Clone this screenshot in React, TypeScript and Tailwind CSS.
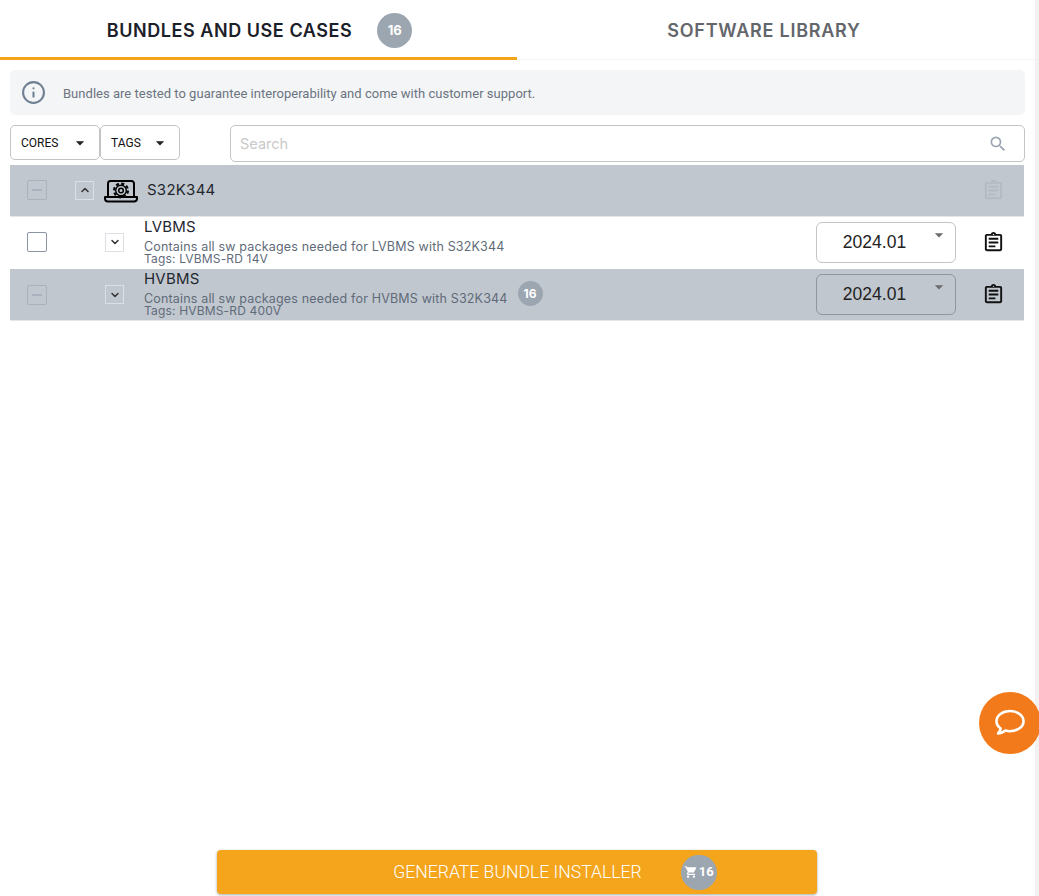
import { ChevronDown, ChevronUp, Info } from 'lucide-react'
import { MdOutlineAssignment, MdShoppingCart, MdArrowDropDown, MdSearch } from 'react-icons/md'

const heading = "font-['Inter',sans-serif]"
const body = "font-['Roboto',sans-serif]"

interface Bundle {
  name: string
  description: string
  tags: string
  active: boolean
  count?: number
}

const bundles: Bundle[] = [
  {
    name: 'LVBMS',
    description: 'Contains all sw packages needed for LVBMS with S32K344',
    tags: 'Tags: LVBMS-RD 14V',
    active: true,
  },
  {
    name: 'HVBMS',
    description: 'Contains all sw packages needed for HVBMS with S32K344',
    tags: 'Tags: HVBMS-RD 400V',
    active: false,
    count: 16,
  },
]

function LaptopGear() {
  return (
    <svg width="34" height="23" viewBox="0 0 34 23" fill="none" stroke="#000" strokeWidth="2">
      <path d="M4 16V3.500A2.500 2.500 0 0 1 6.500 1h21A2.500 2.500 0 0 1 30 3.500V16" />
      <path d="M1 17h32v1.500a3 3 0 0 1-3 3H4a3 3 0 0 1-3-3z" strokeLinejoin="round" />
      <circle cx="17" cy="10.500" r="2.300" strokeWidth="1.500" />
      <circle cx="17" cy="10.500" r="6.900" strokeWidth="2.200" strokeDasharray="3.100 2.320" />
      <circle cx="17" cy="10.500" r="5.300" strokeWidth="1.400" />
    </svg>
  )
}

function FilterButton({ label, width }: { label: string; width: string }) {
  return (
    <button className={`flex h-[35px] items-center justify-between rounded-[5px] border border-[#c4c4c4] bg-white pl-[10px] pr-[9px] text-[12px] text-[#111] ${width} ${body}`}>
      <span className="pt-px">{label}</span>
      <MdArrowDropDown className="text-[20px] text-[#222]" />
    </button>
  )
}

function Badge({ children }: { children: React.ReactNode }) {
  return (
    <span className={`flex h-[25px] w-[25px] items-center justify-center rounded-full bg-[#9ca6b1] text-[12px] font-bold text-white ${heading}`}>
      {children}
    </span>
  )
}

function BundleRow({ bundle }: { bundle: Bundle }) {
  const { active } = bundle
  return (
    <div className={`mr-px flex h-[52px] items-center ${active ? 'bg-white pb-[2px]' : 'border-b border-[#e4e6ea] bg-[#c1c7ce]'}`}>
      <div className="flex w-[95px] shrink-0 pl-[17px]">
        {active ? (
          <span className="h-[20px] w-[20px] rounded-[2px] border border-[#8a94a3] bg-white" />
        ) : (
          <span className="flex h-[20px] w-[20px] items-center justify-center rounded-[2px] border border-[#a9b1bc]">
            <span className="h-[2px] w-[10px] bg-[#a9b1bc]" />
          </span>
        )}
      </div>
      <span className={`flex h-[19px] w-[19px] shrink-0 items-center justify-center border border-[#dcdfe4] ${active ? 'bg-white' : ''}`}>
        <ChevronDown size={12} strokeWidth={3} className="text-[#333]" />
      </span>
      <div className={`ml-[20px] flex min-w-0 flex-1 flex-col self-start ${heading}`}>
        <div className="text-[15px] leading-[19px] tracking-[0.2px] text-[#23272f]">{bundle.name}</div>
        <div className="flex items-center">
          <div className="flex flex-col text-[#5f6b7a]">
            <span className="mt-[4px] text-[12.5px] leading-[13px] tracking-[0.17px]">{bundle.description}</span>
            <span className="text-[12px] leading-[12px] tracking-[0.17px]">{bundle.tags}</span>
          </div>
          {bundle.count !== undefined && (
            <span className="-mt-[18px] ml-[10px]">
              <Badge>{bundle.count}</Badge>
            </span>
          )}
        </div>
      </div>
      <div className={`relative flex h-[41px] w-[140px] shrink-0 items-center justify-center rounded-[6px] border pr-[23px] text-[17.5px] text-[#222] font-['Liberation_Sans',sans-serif] ${active ? 'border-[#c4c4c4] bg-white' : 'border-[#8f96a1]'}`}>
        2024.01
        <MdArrowDropDown className="absolute right-[6px] top-[2px] text-[20px] text-[#6b6b6b]" />
      </div>
      <div className="flex w-[68px] shrink-0 justify-center pl-[7px]">
        <MdOutlineAssignment className="text-[23px] text-[#111]" />
      </div>
    </div>
  )
}

export default function App() {
  return (
    <div className="relative flex h-[896px] w-[1039px] overflow-hidden bg-white">
      <div className="flex w-[1035px] shrink-0 flex-col">
        {/* Tabs */}
        <div className="flex h-[60px] border-b border-[#f3f3f3]">
          <div className="-mb-px flex w-[517px] items-center justify-center gap-[25px] border-b-[3px] border-[#f4a51c] pl-[2px] pt-[4px]">
            <span className={`text-[18px] font-semibold tracking-[0.55px] text-[#1b2028] ${heading}`}>BUNDLES AND USE CASES</span>
            <span className={`flex h-[35px] w-[35px] items-center justify-center rounded-full bg-[#9ca6b1] text-[13px] font-bold text-white ${heading}`}>16</span>
          </div>
          <div className={`flex flex-1 items-center justify-center pr-[24px] pt-[1px] text-[18px] font-semibold tracking-[0.75px] text-[#63666b] ${heading}`}>
            SOFTWARE LIBRARY
          </div>
        </div>

        <div className="flex flex-1 flex-col pl-[10px] pr-[10px]">
          {/* Info */}
          <div className="mt-[10px] flex h-[45px] items-center rounded-[5px] bg-[#f4f5f7] pl-[11px]">
            <Info size={25} strokeWidth={2} className="text-[#6f8092]" />
            <span className={`ml-[17px] pt-[2px] text-[13px] tracking-[0.025px] text-[#6b7480] ${body}`}>
              Bundles are tested to guarantee interoperability and come with customer support.
            </span>
          </div>

          {/* Filters */}
          <div className="mt-[10px] flex items-start">
            <FilterButton label="CORES" width="w-[90px]" />
            <FilterButton label="TAGS" width="w-[80px]" />
            <div className="ml-[50px] flex h-[37px] flex-1 items-center justify-between rounded-[5px] border border-[#c4c4c4] bg-white pl-[9px] pr-[16px]">
              <span className={`text-[14.5px] text-[#c9c9c9] ${heading}`}>Search</span>
              <MdSearch className="text-[20px] text-[#9aa5b1]" />
            </div>
          </div>

          {/* Group */}
          <div className="mr-px mt-[3px] flex h-[52px] items-center border-b border-[#e4e6ea] bg-[#c1c7ce] pb-[1px]">
            <div className="w-[65px] shrink-0 pl-[17px]">
              <span className="flex h-[20px] w-[20px] items-center justify-center rounded-[2px] border border-[#a9b1bc]">
                <span className="h-[2px] w-[10px] bg-[#a9b1bc]" />
              </span>
            </div>
            <span className="flex h-[19px] w-[19px] shrink-0 items-center justify-center border border-[#dcdfe4]">
              <ChevronUp size={12} strokeWidth={3} className="text-[#333]" />
            </span>
            <span className="ml-[10px] mt-[3px]">
              <LaptopGear />
            </span>
            <span className={`ml-[9px] flex-1 text-[15px] tracking-[0.25px] text-[#23272f] ${heading}`}>S32K344</span>
            <div className="flex w-[68px] justify-center pl-[7px]">
              <MdOutlineAssignment className="text-[23px] text-[#b3bac4]" />
            </div>
          </div>

          {bundles.map((bundle) => (
            <BundleRow key={bundle.name} bundle={bundle} />
          ))}

          {/* Generate */}
          <div className="mb-[2px] mr-px mt-auto flex justify-center">
            <button className={`flex h-[44px] w-[600px] items-center justify-center rounded-[4px] bg-[#f4a51c] pl-[76px] text-[17.6px] font-light text-white shadow-[0_1px_3px_rgba(0,0,0,0.35)] ${body}`}>
              <span>GENERATE BUNDLE INSTALLER</span>
              <span className="ml-[39px] flex h-[35px] w-[36px] items-center justify-center gap-[1px] rounded-full bg-[#9ca6b1] text-[13px] font-bold">
                <MdShoppingCart className="text-[14px]" />
                16
              </span>
            </button>
          </div>
        </div>
      </div>

      {/* Scrollbar strip */}
      <div className="flex-1 bg-[#f1f1f1]" />

      {/* Chat */}
      <button className="absolute left-[979px] top-[692px] flex h-[62px] w-[62px] items-center justify-center rounded-full bg-[#f27a1a]">
        <svg width="32" height="28" viewBox="0 0 32 28" fill="none" stroke="#fff" strokeWidth="2.600" strokeLinejoin="round">
          <path d="M16 2C8.500 2 2.500 6.600 2.500 12.200c0 2.900 1.600 5.400 4.200 7.300-.3 1.900-1.300 3.600-2.600 5 2.900-.2 5.400-1.200 7.400-2.900 1.400.4 2.900.6 4.500.6 7.500 0 13.500-4.400 13.500-10S23.500 2 16 2z" />
        </svg>
      </button>
    </div>
  )
}
